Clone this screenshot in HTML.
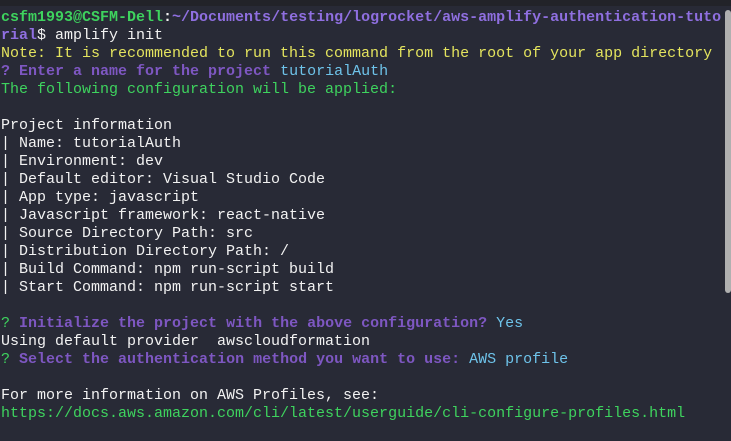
<!DOCTYPE html><html><head><style>
html,body{margin:0;padding:0;width:731px;height:441px;overflow:hidden;background:#282a36;}
.top{position:absolute;left:0;top:0;width:731px;height:6px;background:#222329;}
pre{position:absolute;left:1px;top:9px;margin:0;font-family:"Liberation Mono","DejaVu Sans Mono",monospace;font-size:15px;line-height:18px;color:#f2f2f2;}
.g{color:#3ed35e}.b{font-weight:bold}.p{color:#8f6fe0}.q{color:#7e57c2;font-weight:bold}.y{color:#e4e45e}.c{color:#6ec3ea}
.sb{position:absolute;left:725px;top:10px;width:6px;height:283px;background:#b0b0b0;border-radius:3px;}
</style></head><body><div class="top"></div><pre><span class="g b">csfm1993@CSFM-Dell</span><span class="b">:</span><span class="p b">~/Documents/testing/logrocket/aws-amplify-authentication-tuto
rial</span>$ amplify init
<span class="y">Note: It is recommended to run this command from the root of your app directory</span>
<span class="q">? Enter a name for the project</span> <span class="c">tutorialAuth</span>
<span class="g">The following configuration will be applied:</span>

Project information
| Name: tutorialAuth
| Environment: dev
| Default editor: Visual Studio Code
| App type: javascript
| Javascript framework: react-native
| Source Directory Path: src
| Distribution Directory Path: /
| Build Command: npm run-script build
| Start Command: npm run-script start

<span class="g">?</span> <span class="q">Initialize the project with the above configuration?</span> <span class="c">Yes</span>
Using default provider  awscloudformation
<span class="g">?</span> <span class="q">Select the authentication method you want to use:</span> <span class="c">AWS profile</span>

For more information on AWS Profiles, see:
<span class="g">https://docs.aws.amazon.com/cli/latest/userguide/cli-configure-profiles.html</span></pre><div class="sb"></div></body></html>
